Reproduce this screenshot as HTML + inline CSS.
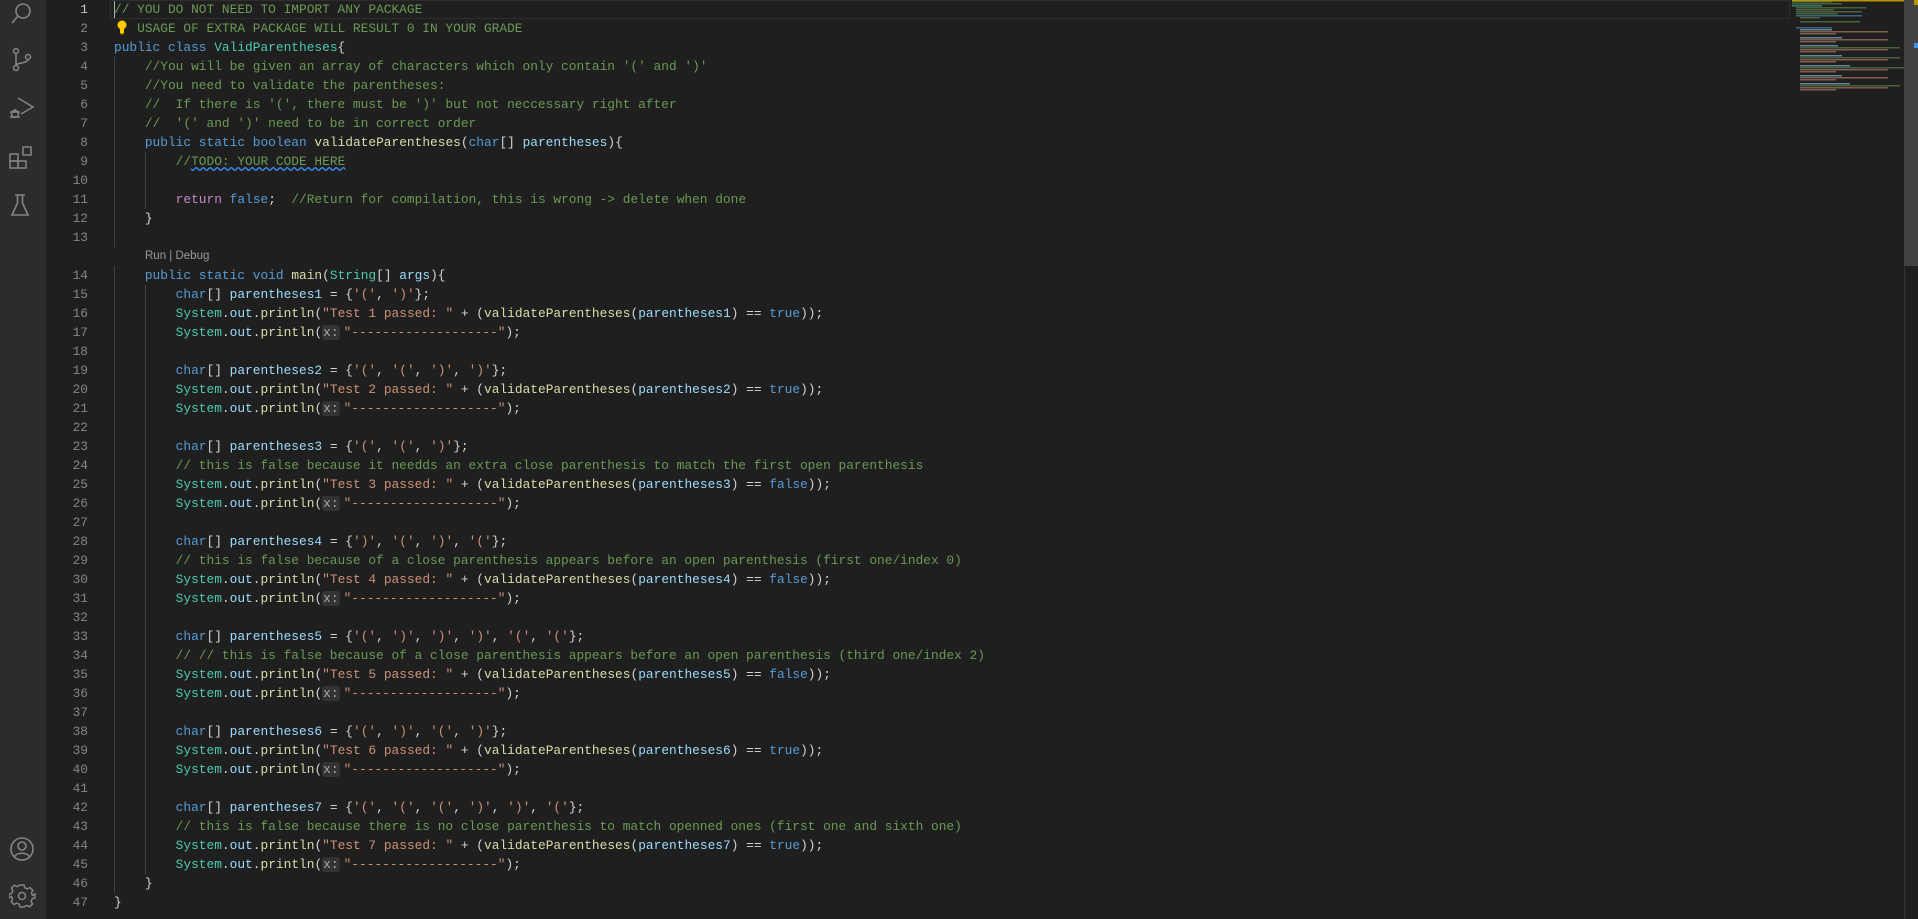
<!DOCTYPE html>
<html><head><meta charset="utf-8"><style>
*{margin:0;padding:0;box-sizing:border-box}
body{width:1918px;height:919px;background:#1f1f1f;overflow:hidden;position:relative;font-family:"Liberation Mono",monospace;font-size:12.85px;color:#d4d4d4}
#act{position:absolute;left:0;top:0;width:46px;height:919px;background:#2c2c2c}
#act svg{position:absolute;left:9px}
.ln{position:absolute;left:46px;width:42px;text-align:right;color:#858585;height:19px;line-height:19px}
.cl{position:absolute;left:114px;height:19px;line-height:19px;white-space:pre}
.c{color:#6a9955}.k{color:#569cd6}.t{color:#4ec9b0}.f{color:#dcdcaa}.s{color:#ce9178}.v{color:#9cdcfe}.r{color:#c586c0}
.h{background:#333;color:#aaa;border-radius:3px;padding:0 1px;margin-right:4px}
.g{position:absolute;width:1px;background:#404040}
</style></head><body>
<div id="act">
<svg width="28" height="28" style="top:0" viewBox="0 0 28 28" fill="none" stroke="#858585" stroke-width="1.6"><circle cx="14" cy="11" r="7"/><path d="M9 16 L3 23"/></svg>
<svg width="28" height="28" style="top:46px" viewBox="0 0 28 28" fill="none" stroke="#858585" stroke-width="1.5"><circle cx="7" cy="5" r="2.5"/><circle cx="7" cy="22" r="2.5"/><circle cx="19" cy="11" r="2.5"/><path d="M7 7.5V19.5M19 13.5c0 4-12 3-12 6"/></svg>
<svg width="28" height="28" style="top:94px" viewBox="0 0 28 28" fill="none" stroke="#858585" stroke-width="1.5"><path d="M9 4L24 13 L12 20"/><circle cx="6" cy="20" r="3.5"/><path d="M1 18h10M1 23h10M6 15v2"/></svg>
<svg width="28" height="28" style="top:144px" viewBox="0 0 28 28" fill="none" stroke="#858585" stroke-width="1.5"><rect x="1" y="10" width="8" height="7"/><rect x="1" y="17" width="8" height="7"/><rect x="9" y="17" width="8" height="7"/><rect x="14" y="3" width="8" height="8"/></svg>
<svg width="28" height="28" style="top:192px" viewBox="0 0 28 28" fill="none" stroke="#858585" stroke-width="1.6"><path d="M6 3h10M8.5 3v8L3 23h16L13.5 11V3"/></svg>
<svg width="28" height="28" style="top:836px" viewBox="0 0 28 28" fill="none" stroke="#858585" stroke-width="1.6"><circle cx="13" cy="13" r="11"/><circle cx="13" cy="10" r="4"/><path d="M5.5 21c2-5 13-5 15 0"/></svg>
<svg width="28" height="28" style="top:882px" viewBox="0 0 28 28" fill="none" stroke="#858585" stroke-width="1.5"><circle cx="13" cy="14" r="3.5"/><path d="M11 3h4l.8 2.8 2.6 1.1 2.6-1.4 2.8 2.8-1.4 2.6 1.1 2.6L26 12v4l-2.8.8-1.1 2.6 1.4 2.6-2.8 2.8-2.6-1.4-2.6 1.1L15 25h-4l-.8-2.8-2.6-1.1-2.6 1.4-2.8-2.8 1.4-2.6-1.1-2.6L0 16v-4l2.8-.8 1.1-2.6-1.4-2.6 2.8-2.8 2.6 1.4 2.6-1.1z"/></svg>
</div>

<div style="position:absolute;left:110px;top:0;width:1680px;height:19px;border:1px solid #2e2e2e"></div>
<div style="position:absolute;left:114px;top:1px;width:1px;height:17px;background:#aeafad"></div>

<div class="g" style="left:114px;top:57px;height:190px"></div>
<div class="g" style="left:114px;top:266px;height:627px"></div>
<div class="g" style="left:145px;top:152px;height:57px"></div>
<div class="g" style="left:145px;top:285px;height:589px"></div>

<svg style="position:absolute;left:115px;top:19px" width="14" height="18" viewBox="0 0 14 18"><circle cx="7" cy="6" r="4.5" fill="#ffcc00"/><rect x="5" y="10" width="4" height="4" fill="#ffcc00"/><rect x="5.5" y="14" width="3" height="1.5" fill="#b89000"/></svg>

<div class="ln" style="top:0;color:#c6c6c6">1</div><div class="cl c" style="top:0">// YOU DO NOT NEED TO IMPORT ANY PACKAGE</div>
<div class="ln" style="top:19px">2</div><div class="cl c" style="top:19px">   USAGE OF EXTRA PACKAGE WILL RESULT 0 IN YOUR GRADE</div>
<div class="ln" style="top:38px">3</div><div class="cl" style="top:38px"><span class="k">public class</span> <span class="t">ValidParentheses</span>{</div>
<div class="ln" style="top:57px">4</div><div class="cl c" style="top:57px">    //You will be given an array of characters which only contain '(' and ')'</div>
<div class="ln" style="top:76px">5</div><div class="cl c" style="top:76px">    //You need to validate the parentheses:</div>
<div class="ln" style="top:95px">6</div><div class="cl c" style="top:95px">    //  If there is '(', there must be ')' but not neccessary right after</div>
<div class="ln" style="top:114px">7</div><div class="cl c" style="top:114px">    //  '(' and ')' need to be in correct order</div>
<div class="ln" style="top:133px">8</div><div class="cl" style="top:133px">    <span class="k">public static boolean</span> <span class="f">validateParentheses</span>(<span class="k">char</span>[] <span class="v">parentheses</span>){</div>
<div class="ln" style="top:152px">9</div><div class="cl c" style="top:152px">        //<span style="text-decoration:underline wavy #3794ff">TODO: YOUR CODE HERE</span></div>
<div class="ln" style="top:171px">10</div>
<div class="ln" style="top:190px">11</div><div class="cl" style="top:190px">        <span class="r">return</span> <span class="k">false</span>;  <span class="c">//Return for compilation, this is wrong -&gt; delete when done</span></div>
<div class="ln" style="top:209px">12</div><div class="cl" style="top:209px">    }</div>
<div class="ln" style="top:228px">13</div>
<div class="cl" style="top:247px;left:145px;font-family:'Liberation Sans',sans-serif;font-size:11.5px;color:#999">Run | Debug</div>
<div class="ln" style="top:266px">14</div><div class="cl" style="top:266px">    <span class="k">public static void</span> <span class="f">main</span>(<span class="t">String</span>[] <span class="v">args</span>){</div>
<div class="ln" style="top:285px">15</div><div class="cl" style="top:285px">        <span class="k">char</span>[] <span class="v">parentheses1</span> = {<span class="s">'('</span>, <span class="s">')'</span>};</div>
<div class="ln" style="top:304px">16</div><div class="cl" style="top:304px">        <span class="t">System</span>.<span class="v">out</span>.<span class="f">println</span>(<span class="s">"Test 1 passed: "</span> + (<span class="f">validateParentheses</span>(<span class="v">parentheses1</span>) == <span class="k">true</span>));</div>
<div class="ln" style="top:323px">17</div><div class="cl" style="top:323px">        <span class="t">System</span>.<span class="v">out</span>.<span class="f">println</span>(<span class="h">x:</span><span class="s">"-------------------"</span>);</div>
<div class="ln" style="top:342px">18</div>
<div class="ln" style="top:361px">19</div><div class="cl" style="top:361px">        <span class="k">char</span>[] <span class="v">parentheses2</span> = {<span class="s">'('</span>, <span class="s">'('</span>, <span class="s">')'</span>, <span class="s">')'</span>};</div>
<div class="ln" style="top:380px">20</div><div class="cl" style="top:380px">        <span class="t">System</span>.<span class="v">out</span>.<span class="f">println</span>(<span class="s">"Test 2 passed: "</span> + (<span class="f">validateParentheses</span>(<span class="v">parentheses2</span>) == <span class="k">true</span>));</div>
<div class="ln" style="top:399px">21</div><div class="cl" style="top:399px">        <span class="t">System</span>.<span class="v">out</span>.<span class="f">println</span>(<span class="h">x:</span><span class="s">"-------------------"</span>);</div>
<div class="ln" style="top:418px">22</div>
<div class="ln" style="top:437px">23</div><div class="cl" style="top:437px">        <span class="k">char</span>[] <span class="v">parentheses3</span> = {<span class="s">'('</span>, <span class="s">'('</span>, <span class="s">')'</span>};</div>
<div class="ln" style="top:456px">24</div><div class="cl c" style="top:456px">        // this is false because it needds an extra close parenthesis to match the first open parenthesis</div>
<div class="ln" style="top:475px">25</div><div class="cl" style="top:475px">        <span class="t">System</span>.<span class="v">out</span>.<span class="f">println</span>(<span class="s">"Test 3 passed: "</span> + (<span class="f">validateParentheses</span>(<span class="v">parentheses3</span>) == <span class="k">false</span>));</div>
<div class="ln" style="top:494px">26</div><div class="cl" style="top:494px">        <span class="t">System</span>.<span class="v">out</span>.<span class="f">println</span>(<span class="h">x:</span><span class="s">"-------------------"</span>);</div>
<div class="ln" style="top:513px">27</div>
<div class="ln" style="top:532px">28</div><div class="cl" style="top:532px">        <span class="k">char</span>[] <span class="v">parentheses4</span> = {<span class="s">')'</span>, <span class="s">'('</span>, <span class="s">')'</span>, <span class="s">'('</span>};</div>
<div class="ln" style="top:551px">29</div><div class="cl c" style="top:551px">        // this is false because of a close parenthesis appears before an open parenthesis (first one/index 0)</div>
<div class="ln" style="top:570px">30</div><div class="cl" style="top:570px">        <span class="t">System</span>.<span class="v">out</span>.<span class="f">println</span>(<span class="s">"Test 4 passed: "</span> + (<span class="f">validateParentheses</span>(<span class="v">parentheses4</span>) == <span class="k">false</span>));</div>
<div class="ln" style="top:589px">31</div><div class="cl" style="top:589px">        <span class="t">System</span>.<span class="v">out</span>.<span class="f">println</span>(<span class="h">x:</span><span class="s">"-------------------"</span>);</div>
<div class="ln" style="top:608px">32</div>
<div class="ln" style="top:627px">33</div><div class="cl" style="top:627px">        <span class="k">char</span>[] <span class="v">parentheses5</span> = {<span class="s">'('</span>, <span class="s">')'</span>, <span class="s">')'</span>, <span class="s">')'</span>, <span class="s">'('</span>, <span class="s">'('</span>};</div>
<div class="ln" style="top:646px">34</div><div class="cl c" style="top:646px">        // // this is false because of a close parenthesis appears before an open parenthesis (third one/index 2)</div>
<div class="ln" style="top:665px">35</div><div class="cl" style="top:665px">        <span class="t">System</span>.<span class="v">out</span>.<span class="f">println</span>(<span class="s">"Test 5 passed: "</span> + (<span class="f">validateParentheses</span>(<span class="v">parentheses5</span>) == <span class="k">false</span>));</div>
<div class="ln" style="top:684px">36</div><div class="cl" style="top:684px">        <span class="t">System</span>.<span class="v">out</span>.<span class="f">println</span>(<span class="h">x:</span><span class="s">"-------------------"</span>);</div>
<div class="ln" style="top:703px">37</div>
<div class="ln" style="top:722px">38</div><div class="cl" style="top:722px">        <span class="k">char</span>[] <span class="v">parentheses6</span> = {<span class="s">'('</span>, <span class="s">')'</span>, <span class="s">'('</span>, <span class="s">')'</span>};</div>
<div class="ln" style="top:741px">39</div><div class="cl" style="top:741px">        <span class="t">System</span>.<span class="v">out</span>.<span class="f">println</span>(<span class="s">"Test 6 passed: "</span> + (<span class="f">validateParentheses</span>(<span class="v">parentheses6</span>) == <span class="k">true</span>));</div>
<div class="ln" style="top:760px">40</div><div class="cl" style="top:760px">        <span class="t">System</span>.<span class="v">out</span>.<span class="f">println</span>(<span class="h">x:</span><span class="s">"-------------------"</span>);</div>
<div class="ln" style="top:779px">41</div>
<div class="ln" style="top:798px">42</div><div class="cl" style="top:798px">        <span class="k">char</span>[] <span class="v">parentheses7</span> = {<span class="s">'('</span>, <span class="s">'('</span>, <span class="s">'('</span>, <span class="s">')'</span>, <span class="s">')'</span>, <span class="s">'('</span>};</div>
<div class="ln" style="top:817px">43</div><div class="cl c" style="top:817px">        // this is false because there is no close parenthesis to match openned ones (first one and sixth one)</div>
<div class="ln" style="top:836px">44</div><div class="cl" style="top:836px">        <span class="t">System</span>.<span class="v">out</span>.<span class="f">println</span>(<span class="s">"Test 7 passed: "</span> + (<span class="f">validateParentheses</span>(<span class="v">parentheses7</span>) == <span class="k">true</span>));</div>
<div class="ln" style="top:855px">45</div><div class="cl" style="top:855px">        <span class="t">System</span>.<span class="v">out</span>.<span class="f">println</span>(<span class="h">x:</span><span class="s">"-------------------"</span>);</div>
<div class="ln" style="top:874px">46</div><div class="cl" style="top:874px">    }</div>
<div class="ln" style="top:893px">47</div><div class="cl" style="top:893px">}</div>

<svg style="position:absolute;left:1792px;top:0" width="112" height="100" viewBox="0 0 112 100">
<rect x="0" y="0" width="112" height="1.5" fill="#b89500"/>
<g opacity="0.55">
<rect x="0" y="1" width="40" height="1.5" fill="#6a9955"/><rect x="0" y="3" width="50" height="1.5" fill="#6a9955"/>
<rect x="0" y="5" width="30" height="1.5" fill="#4ec9b0"/>
<rect x="4" y="7" width="70" height="1.5" fill="#6a9955"/><rect x="4" y="9" width="38" height="1.5" fill="#6a9955"/><rect x="4" y="11" width="66" height="1.5" fill="#6a9955"/><rect x="4" y="13" width="42" height="1.5" fill="#6a9955"/>
<rect x="4" y="15" width="66" height="1.5" fill="#569cd6"/><rect x="8" y="17" width="20" height="1.5" fill="#6a9955"/>
<rect x="8" y="21" width="60" height="1.5" fill="#6a9955"/><rect x="4" y="27" width="36" height="1.5" fill="#569cd6"/>
<rect x="8" y="29" width="32" height="1.5" fill="#9cdcfe"/><rect x="8" y="31" width="88" height="1.5" fill="#ce9178"/><rect x="8" y="33" width="36" height="1.5" fill="#ce9178"/>
<rect x="8" y="37" width="42" height="1.5" fill="#9cdcfe"/><rect x="8" y="39" width="88" height="1.5" fill="#ce9178"/><rect x="8" y="41" width="36" height="1.5" fill="#ce9178"/>
<rect x="8" y="45" width="38" height="1.5" fill="#9cdcfe"/><rect x="8" y="47" width="100" height="1.5" fill="#6a9955"/><rect x="8" y="49" width="88" height="1.5" fill="#ce9178"/><rect x="8" y="51" width="36" height="1.5" fill="#ce9178"/>
<rect x="8" y="55" width="42" height="1.5" fill="#9cdcfe"/><rect x="8" y="57" width="100" height="1.5" fill="#6a9955"/><rect x="8" y="59" width="88" height="1.5" fill="#ce9178"/><rect x="8" y="61" width="36" height="1.5" fill="#ce9178"/>
<rect x="8" y="65" width="50" height="1.5" fill="#9cdcfe"/><rect x="8" y="67" width="104" height="1.5" fill="#6a9955"/><rect x="8" y="69" width="88" height="1.5" fill="#ce9178"/><rect x="8" y="71" width="36" height="1.5" fill="#ce9178"/>
<rect x="8" y="75" width="42" height="1.5" fill="#9cdcfe"/><rect x="8" y="77" width="88" height="1.5" fill="#ce9178"/><rect x="8" y="79" width="36" height="1.5" fill="#ce9178"/>
<rect x="8" y="83" width="50" height="1.5" fill="#9cdcfe"/><rect x="8" y="85" width="100" height="1.5" fill="#6a9955"/><rect x="8" y="87" width="88" height="1.5" fill="#ce9178"/><rect x="8" y="89" width="36" height="1.5" fill="#ce9178"/>
</g></svg>
<div style="position:absolute;left:1904px;top:0;width:14px;height:266px;background:#434343"></div>
<div style="position:absolute;left:1904px;top:266px;width:1px;height:653px;background:#333"></div>
<div style="position:absolute;left:1914px;top:0;width:4px;height:5px;background:#b89500"></div>
<div style="position:absolute;left:1914px;top:43px;width:4px;height:5px;background:#3794ff"></div>
</body></html>
